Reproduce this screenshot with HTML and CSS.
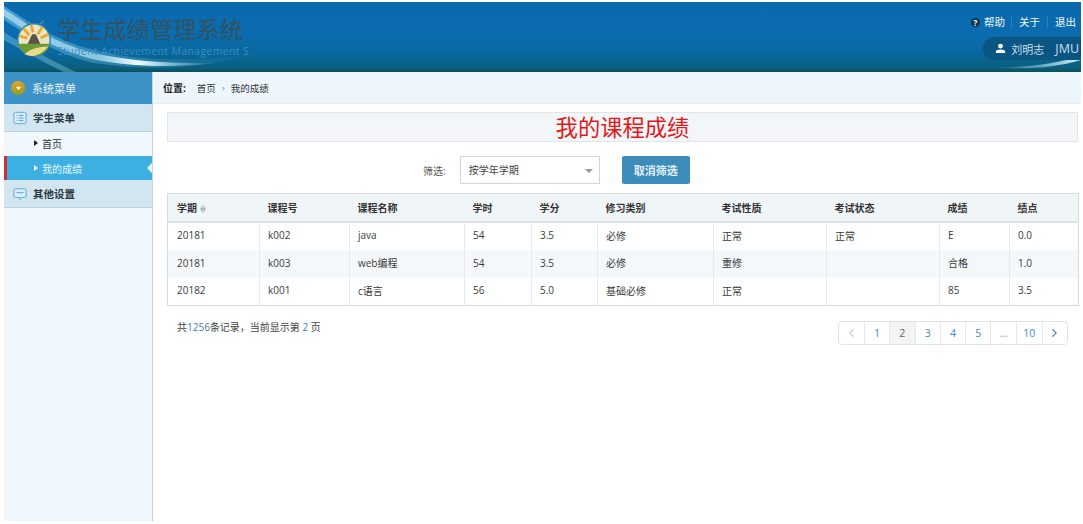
FILE: index.html
```html
<!DOCTYPE html>
<html lang="zh-CN">
<head>
<meta charset="utf-8">
<title>学生成绩管理系统</title>
<link rel="stylesheet" href="styles.css">
</head>
<body>
<div class="page">
  <header class="header">
    <svg class="swoosh" viewBox="0 0 1077 70" preserveAspectRatio="none" aria-hidden="true">
      <defs>
        <linearGradient id="sw" x1="0" x2="1" y1="0" y2="0">
          <stop offset="0" stop-color="#cfeefc" stop-opacity=".6"/>
          <stop offset=".45" stop-color="#bfeaf9" stop-opacity=".65"/>
          <stop offset=".62" stop-color="#f2fdff" stop-opacity="1"/>
          <stop offset="1" stop-color="#8fd4ee" stop-opacity="0"/>
        </linearGradient>
        <linearGradient id="sw2" x1="0" x2="1" y1="0" y2="0">
          <stop offset="0" stop-color="#8fd4ee" stop-opacity="0"/>
          <stop offset="1" stop-color="#eaffff" stop-opacity=".9"/>
        </linearGradient>
        <linearGradient id="glow" x1="0" x2="1" y1="0" y2="0">
          <stop offset="0" stop-color="#6cc0e6" stop-opacity=".6"/>
          <stop offset="1" stop-color="#6cc0e6" stop-opacity="0"/>
        </linearGradient>
      </defs>
      <path d="M0 4C25 20 50 38 90 48C130 58 180 61 250 53C190 69 130 68 85 60C50 50 25 34 0 18Z" fill="url(#glow)"/>
      <path d="M0 7C25 23 50 41 90 51C125 59 165 62 215 61C165 66 125 65 88 57C50 47 25 31 0 14Z" fill="url(#sw)"/>
      <path d="M0 30C25 46 50 60 72 70H60C38 60 18 48 0 38Z" fill="#9fdcf2" opacity=".35"/>
      <path d="M985 65C1020 66 1050 62 1077 54V58C1050 66 1020 68 985 65Z" fill="url(#sw2)"/>
    </svg>
    <div class="brand">
      <svg class="logo" viewBox="0 0 40 40" aria-hidden="true">
        <path d="M11 1l8 9M30 1l-9 9" stroke="#3a86b4" stroke-width="2"/>
        <circle cx="20" cy="21" r="17" fill="#e8e6c8" stroke="#2c86a8" stroke-width="1.500"/>
        <path d="M5 17l8 2M9 9l6 7M17 5l2 8M29 7l-5 8M35 15l-8 4" stroke="#eda92c" stroke-width="3"/>
        <path d="M13 26l5-11h4l5 11Z" fill="#5d5148"/>
        <path d="M3.500 25h33a17 17 0 0 1-33 0Z" fill="#6b9b35"/>
        <path d="M10 36C16 31 24 28 35 28C30 34 26 36 20 38C16 38 13 37 10 36Z" fill="#e8dc8a"/>
      </svg>
      <div class="brand-text">
        <div class="brand-cn">学生成绩管理系统</div>
        <div class="brand-en">Student Achievement Management S</div>
      </div>
    </div>
    <div class="top-right">
      <nav class="top-links">
        <span class="help-dot">?</span><a class="top-link tl-first">帮助</a><a class="top-link">关于</a><a class="top-link tl-last">退出</a>
      </nav>
      <div class="user-pill">
        <svg class="user-icon" viewBox="0 0 12 12" aria-hidden="true"><circle cx="6" cy="3.400" r="2.700" fill="#fff"/><path d="M1 11V9.400C1 7.800 3 7 6 7s5 .8 5 2.400V11Z" fill="#fff"/></svg>
        <span>刘明志</span><span class="user-org">JMU</span>
      </div>
    </div>
  </header>

  <div class="layout">
    <aside class="sidebar">
      <div class="side-title">
        <span class="side-dot"><svg viewBox="0 0 8 6" aria-hidden="true"><path d="M1 1h6L4 5Z" fill="#fff"/></svg></span>
        系统菜单
      </div>
      <div class="group">
        <svg class="group-icon" viewBox="0 0 16 16" aria-hidden="true"><rect x="1" y="1.500" width="14" height="13" rx="2" fill="#d9eefa" stroke="#4aa3d6"/><path d="M4 5h1M4 8h1M4 11h1M6.500 5h5.500M6.500 8h5.500M6.500 11h5.500" stroke="#4a95c6"/></svg>
        学生菜单
      </div>
      <a class="item"><i class="tri"></i>首页</a>
      <a class="item item-active"><i class="tri"></i>我的成绩</a>
      <div class="group">
        <svg class="group-icon" viewBox="0 0 16 16" aria-hidden="true"><path d="M2.500 2h11A1.500 1.500 0 0 1 15 3.500v7a1.500 1.500 0 0 1-1.500 1.500H10l-2 2.500V12H2.500A1.500 1.500 0 0 1 1 10.500v-7A1.500 1.500 0 0 1 2.500 2Z" fill="#d9eefa" stroke="#4aa3d6"/><path d="M4 6.500h8" stroke="#4a95c6"/></svg>
        其他设置
      </div>
    </aside>

    <main class="main">
      <div class="crumb"><b>位置:</b><span class="crumb-a">首页</span><span class="crumb-sep">›</span><span>我的成绩</span></div>
      <div class="content">
        <h1 class="title">我的课程成绩</h1>
        <div class="filter">
          <label class="filter-label">筛选:</label>
          <div class="select">按学年学期<i class="caret"></i></div>
          <button class="btn">取消筛选</button>
        </div>
        <table class="grid">
          <colgroup>
            <col class="c1"><col class="c2"><col class="c3"><col class="c4"><col class="c5"><col class="c6"><col class="c7"><col class="c8"><col class="c9"><col class="c10">
          </colgroup>
          <thead>
            <tr><th>学期<svg class="sort" viewBox="0 0 6 8" aria-hidden="true"><path d="M3 .8L5.200 3.400H.8ZM3 7.200L.8 4.600H5.200Z" fill="none" stroke="#7d929f" stroke-width=".7"/></svg></th><th>课程号</th><th>课程名称</th><th>学时</th><th>学分</th><th>修习类别</th><th>考试性质</th><th>考试状态</th><th>成绩</th><th>绩点</th></tr>
          </thead>
          <tbody>
            <tr><td>20181</td><td>k002</td><td>java</td><td>54</td><td>3.5</td><td>必修</td><td>正常</td><td>正常</td><td>E</td><td>0.0</td></tr>
            <tr class="odd"><td>20181</td><td>k003</td><td>web编程</td><td>54</td><td>3.5</td><td>必修</td><td>重修</td><td></td><td>合格</td><td>1.0</td></tr>
            <tr><td>20182</td><td>k001</td><td>c语言</td><td>56</td><td>5.0</td><td>基础必修</td><td>正常</td><td></td><td>85</td><td>3.5</td></tr>
          </tbody>
        </table>
        <div class="foot">
          <div class="count">共<span class="num">1256</span>条记录，当前显示第 <span class="num">2</span> 页</div>
          <ul class="pager">
            <li class="muted"><svg class="chev" viewBox="0 0 8 12" aria-hidden="true"><path d="M6.500 1.500L2 6l4.500 4.500" fill="none" stroke="#c4c9cd" stroke-width="1.300"/></svg></li>
            <li>1</li><li class="current">2</li><li>3</li><li>4</li><li>5</li><li class="muted">...</li><li class="wide">10</li>
            <li><svg class="chev" viewBox="0 0 8 12" aria-hidden="true"><path d="M1.500 1.500L6 6l-4.500 4.500" fill="none" stroke="#3c8dbc" stroke-width="1.300"/></svg></li>
          </ul>
        </div>
      </div>
    </main>
  </div>
</div>
</body>
</html>
```

FILE: styles.css
```css
* { box-sizing: border-box; }
html, body { margin: 0; height: 100%; background: #fff; }
body {
  font-family: "Open Sans", "Liberation Sans", "Noto Sans CJK SC", sans-serif;
  font-size: 10px;
  color: #333;
  overflow: hidden;
}
.page {
  width: 1083px;
  height: 521px;
  padding: 2px 2px 0 4px;
  display: flex;
  flex-direction: column;
}
.header {
  position: relative;
  height: 70px;
  flex: none;
  background: linear-gradient(180deg, #0a6aae 0%, #0a6cae 45%, #08689f 72%, #0a5f7e 94%, #0c4f5c 100%);
  display: flex;
  justify-content: space-between;
  overflow: hidden;
}
.swoosh {
  position: absolute;
  inset: 0;
  width: 100%;
  height: 100%;
}
.brand {
  position: relative;
  display: flex;
  align-items: flex-start;
  padding: 13px 0 0 11px;
}
.logo { width: 38px; height: 38px; flex: none; margin-top: 5px; }
.brand-text { margin-left: 4px; }
.brand-cn {
  font-size: 23.250px;
  line-height: 28px;
  color: #33525f;
}
.brand-en {
  font-size: 10.500px;
  line-height: 14px;
  margin-top: 1px;
  color: #3a8ec0;
  white-space: nowrap;
  letter-spacing: .35px;
}
.top-right {
  position: relative;
  display: flex;
  flex-direction: column;
  align-items: flex-end;
  padding-top: 13px;
}
.top-links { display: flex; align-items: center; height: 14px; margin-right: 5px; }
.help-dot {
  width: 9px;
  height: 9px;
  border-radius: 50%;
  background: #10344c;
  color: #fff;
  font-size: 8px;
  font-weight: 700;
  line-height: 9px;
  text-align: center;
  margin-right: 4px;
}
.top-link {
  color: #f1f8fc;
  font-size: 10.500px;
  line-height: 12px;
  padding: 0 7px;
  border-right: 1px solid #2d82b8;
}
.tl-first { padding: 0 6px 0 0; }
.tl-last { border-right: 0; padding-right: 0; }
.user-pill {
  display: flex;
  align-items: center;
  height: 23px;
  margin-top: 8px;
  padding: 0 2px 0 12px;
  border-radius: 12px 0 0 12px;
  background: #0a5682;
  color: #c9deea;
  font-size: 11px;
  white-space: nowrap;
}
.user-icon { width: 11px; height: 11px; margin-right: 5px; }
.user-org { margin-left: 11px; font-size: 12.500px; }

.layout { flex: 1; display: flex; min-height: 0; }
.sidebar {
  width: 149px;
  flex: none;
  background: #f0f8fe;
  border-right: 1px solid #c6d4dc;
}
.side-title {
  height: 32px;
  display: flex;
  align-items: center;
  padding-left: 7px;
  background: #3d93c8;
  color: #eaf4fa;
  font-size: 11px;
}
.side-dot {
  width: 14px;
  height: 14px;
  border-radius: 50%;
  margin-right: 7px;
  background: linear-gradient(180deg, #f0a020, #8f9f20);
  display: flex;
  align-items: center;
  justify-content: center;
}
.side-dot svg { width: 7px; height: 5px; }
.group {
  height: 28px;
  display: flex;
  align-items: center;
  padding-left: 9px;
  background: #d3e6f0;
  border-bottom: 1px solid #b9d3e0;
  font-size: 10.500px;
  font-weight: 700;
  color: #2b3a42;
}
.group-icon { width: 14px; height: 14px; margin-right: 6px; flex: none; }
.item {
  position: relative;
  height: 24px;
  display: flex;
  align-items: center;
  padding: 0 0 2px 30px;
  font-size: 10px;
  color: #333;
}
.tri {
  width: 0;
  height: 0;
  margin-right: 4px;
  border-left: 4px solid #222;
  border-top: 3px solid transparent;
  border-bottom: 3px solid transparent;
}
.item-active {
  background: #3db0e3;
  color: #e9f7fd;
  border-left: 3px solid #c8303a;
  padding: 0 0 0 27px;
}
.item-active .tri { border-left-color: #fff; }
.item-active::after {
  content: "";
  position: absolute;
  right: 0;
  top: 7px;
  border-right: 5px solid #f0f8fe;
  border-top: 5px solid transparent;
  border-bottom: 5px solid transparent;
}

.main { flex: 1; min-width: 0; display: flex; flex-direction: column; }
.crumb {
  height: 32px;
  flex: none;
  display: flex;
  align-items: center;
  padding-left: 10px;
  background: #edf6fc;
  border-bottom: 1px solid #e3eef5;
  font-size: 9.500px;
  color: #333;
}
.crumb b { margin-right: 11px; color: #222; font-size: 10px; }
.crumb-sep { margin: 0 6px; color: #888; }
.content { padding: 8px 3px 0 14px; }
.title {
  margin: 0;
  height: 30px;
  line-height: 29px;
  text-align: center;
  font-size: 22.300px;
  font-weight: 400;
  color: #e3191c;
  background: #f3f6f8;
  border: 1px solid #dfe5e9;
}
.filter {
  display: flex;
  align-items: center;
  height: 28px;
  margin-top: 14px;
  padding-left: 256px;
}
.filter-label { font-size: 10px; color: #555; margin-right: 14px; }
.select {
  position: relative;
  width: 140px;
  height: 28px;
  line-height: 26px;
  padding-left: 8px;
  font-size: 10px;
  color: #444;
  border: 1px solid #ced7de;
  background: #fff;
}
.caret {
  position: absolute;
  right: 6px;
  top: 12px;
  border-top: 4px solid #999;
  border-left: 4px solid transparent;
  border-right: 4px solid transparent;
}
.btn {
  width: 68px;
  height: 28px;
  margin-left: 22px;
  padding: 0;
  border: 0;
  border-radius: 2px;
  background: #3c8dbc;
  color: #e5f1f8;
  font-family: inherit;
  font-size: 11px;
  font-weight: 700;
}
.grid {
  width: 911px;
  margin-top: 9px;
  border-collapse: collapse;
  table-layout: fixed;
  border: 1px solid #d6dbdf;
  font-size: 10px;
}
.c1 { width: 92px; } .c2 { width: 90px; } .c3 { width: 115px; } .c4 { width: 67px; } .c5 { width: 66px; }
.c6 { width: 116px; } .c7 { width: 113px; } .c8 { width: 113px; } .c9 { width: 70px; } .c10 { width: 69px; }
.grid th {
  height: 28px;
  padding: 0 8px 0 9px;
  text-align: left;
  font-weight: 700;
  color: #333;
  background: #f0f5f8;
  border-bottom: 2px solid #dde2e6;
}
.grid th + th { padding-left: 8px; }
.grid td {
  height: 28px;
  padding: 0 8px 2px 9px;
  color: #3a3a3a;
  border-left: 1px solid #e6e9eb;
}
.grid td + td { padding-left: 8px; }
.grid td:first-child { border-left: 0; }
.grid .odd td { background: #f4f8fa; }
.sort { width: 6px; height: 8px; margin-left: 3px; vertical-align: -1px; }
.foot {
  display: flex;
  justify-content: space-between;
  align-items: flex-start;
  margin-top: 15px;
  padding: 0 10px;
}
.count { font-size: 10px; color: #444; line-height: 14px; margin-top: -1px; }
.num { color: #3c7fb1; }
.pager {
  display: flex;
  margin: 0;
  padding: 0;
  list-style: none;
  height: 24px;
  border: 1px solid #dfe3e6;
  border-radius: 4px;
}
.pager li {
  width: 25.300px;
  display: flex;
  align-items: center;
  justify-content: center;
  color: #3c8dbc;
  font-size: 10.500px;
  border-left: 1px solid #e6e9eb;
}
.pager li:first-child { border-left: 0; }
.pager li.current { background: #f3f3f3; color: #666; }
.pager li.muted { color: #999; }
.pager li.wide { width: 26px; }
.chev { width: 7px; height: 10px; }
```
